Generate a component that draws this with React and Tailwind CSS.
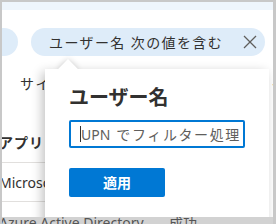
import React from 'react';

const font = "font-['Noto_Sans','Noto_Sans_CJK_JP',sans-serif]";

function CloseIcon() {
  return (
    <svg width="14" height="14" viewBox="0 0 14 14" fill="none" stroke="#605e5c" strokeWidth="1.3">
      <line x1="1" y1="1" x2="13" y2="13" />
      <line x1="13" y1="1" x2="1" y2="13" />
    </svg>
  );
}

export default function App() {
  return (
    <div className={`w-[276px] h-[224px] bg-[#c8c8c8] pl-[2px] pt-[2px] pr-[3px] ${font} text-[#323130] overflow-hidden`}>
      <div className="relative h-[215px] bg-white overflow-hidden">
        {/* top strip */}
        <div className="h-[8px] bg-[#eef5fc]" />

        {/* filter pills */}
        <div className="mt-[18px] flex h-[28px] items-center gap-[13px]">
          <div className="h-[28px] w-[16px] shrink-0 rounded-r-full bg-[#deecf9]" />
          <div className="flex h-[28px] w-[234px] shrink-0 items-center justify-between rounded-full bg-[#deecf9] pl-[18px] pr-[8px]">
            <span className="text-[14px] tracking-[1.4px] whitespace-nowrap">ユーザー名 次の値を含む</span>
            <CloseIcon />
          </div>
        </div>

        {/* tabs row behind popup */}
        <div className="mt-[17px] flex h-[20px] items-center text-[14px] tracking-[1.4px] whitespace-nowrap">
          <span className="ml-[18px]">サインイン ログ</span>
          <span className="ml-auto mr-[-60px]">イベント</span>
        </div>

        {/* table */}
        <div className="mt-[29px] -ml-[3px] w-[46px] text-[14px]">
          <div className="flex h-[41px] items-center border-b border-[#e1dfdd] font-bold tracking-[1px] whitespace-nowrap">
            アプリ
          </div>
          <div className="flex h-[39px] items-center border-b border-[#e1dfdd] whitespace-nowrap">
            Microsoft
          </div>
        </div>

        {/* popup */}
        <div className="absolute left-[43px] top-[67px] w-[224px] h-[170px] shadow-[-3px_3px_10px_rgba(0,0,0,0.24)]">
          <div className="absolute left-[16px] top-[-7px] h-[14px] w-[14px] rotate-45 bg-white shadow-[0_0_6px_rgba(0,0,0,0.2)]" />
          <div className="relative h-full bg-white px-6 pt-[15px]">
            <div className="text-[20px] leading-[28px] font-bold">ユーザー名</div>
            <div className="mt-[8px] flex h-[28px] w-[176px] items-center overflow-hidden rounded-[2px] border-2 border-[#0078d4] pl-[9px]">
              <span className="h-[16px] w-px shrink-0 bg-[#323130]" />
              <span className="text-[14px] text-[#605e5c] whitespace-nowrap">UPN</span>
              <span className="ml-[6px] text-[14px] tracking-[1.6px] text-[#605e5c] whitespace-nowrap">でフィルター処理</span>
            </div>
            <button className="mt-[20px] flex h-[29px] w-[96px] items-center justify-center rounded-[2px] bg-[#0078d4] text-[14px] font-bold text-white">
              適用
            </button>
          </div>
        </div>
      </div>

      {/* bottom edge, next row peeks through */}
      <div className="h-[7px] overflow-hidden bg-[#d2d2d2]">
        <div className="-mt-[5px] flex text-[14px] text-[#555] whitespace-nowrap">
          <span className="-ml-[3px] w-[170px]">Azure Active Directory</span>
          <span>成功</span>
        </div>
      </div>
    </div>
  );
}
